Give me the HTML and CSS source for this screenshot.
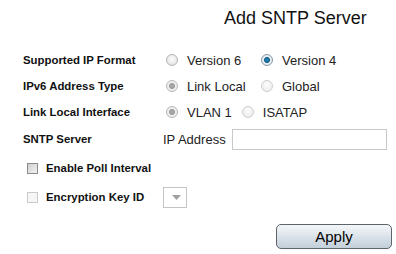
FILE: index.html
```html
<!DOCTYPE html>
<html lang="en">
<head>
    <meta charset="UTF-8">
    <title>Add SNTP Server</title>
    <link rel="stylesheet" href="styles.css">
</head>
<body>
    <h1 class="title">Add SNTP Server</h1>
    <form class="sntp-form">
        <div class="row">
            <span class="label">Supported IP Format</span>
            <div class="options">
                <label class="option fixed"><input type="radio" name="format" class="radio"> Version 6</label>
                <label class="option"><input type="radio" name="format" class="radio" checked> Version 4</label>
            </div>
        </div>
        <div class="row">
            <span class="label">IPv6 Address Type</span>
            <div class="options">
                <label class="option fixed"><input type="radio" name="type" class="radio" checked disabled> Link Local</label>
                <label class="option"><input type="radio" name="type" class="radio" disabled> Global</label>
            </div>
        </div>
        <div class="row">
            <span class="label">Link Local Interface</span>
            <div class="options">
                <label class="option"><input type="radio" name="iface" class="radio" checked disabled> VLAN 1</label>
                <label class="option near"><input type="radio" name="iface" class="radio" disabled> ISATAP</label>
            </div>
        </div>
        <div class="row server-row">
            <span class="label">SNTP Server</span>
            <div class="options">
                <span class="plain">IP Address</span>
                <input type="text" class="text-input">
            </div>
        </div>
        <div class="row check-row poll-row">
            <label class="check-label"><input type="checkbox" class="check"> Enable Poll Interval</label>
        </div>
        <div class="row check-row">
            <label class="check-label"><input type="checkbox" class="check light"> Encryption Key ID</label>
            <div class="options">
                <span class="dropdown">
                    <svg width="9" height="5" viewBox="0 0 9 5"><path d="M0 0h9L4.5 5z" fill="#a0a0a0"/></svg>
                </span>
            </div>
        </div>
        <div class="actions">
            <button type="button" class="apply">Apply</button>
        </div>
    </form>
</body>
</html>
```

FILE: styles.css
```css
body {
    margin: 0;
    padding: 0;
    background: #fff;
    font-family: "Liberation Sans", Arial, sans-serif;
    color: #111;
}

.title {
    margin: 0;
    padding: 8px 0 0 224px;
    font-size: 18px;
    font-weight: normal;
    line-height: 20px;
    color: #111;
}

.sntp-form {
    margin-top: 19px;
}

.row {
    display: flex;
    align-items: center;
    height: 26px;
}

.label {
    width: 140px;
    padding-left: 23px;
    font-size: 11.4px;
    font-weight: bold;
    color: #111;
}

.options {
    display: flex;
    align-items: center;
    font-size: 13px;
    color: #222;
}

.option {
    display: flex;
    align-items: center;
    margin-left: 3px;
}

.option.fixed {
    width: 92px;
}

.option.near {
    margin-left: 10px;
}

/* radio buttons */
.radio {
    appearance: none;
    -webkit-appearance: none;
    width: 12px;
    height: 12px;
    margin: 0 9px 0 0;
    border: 1px solid #b4b4b4;
    border-radius: 50%;
    background: radial-gradient(circle at 50% 40%, #fcfcfc 0%, #e4e4e4 80%);
    box-sizing: border-box;
}

.radio:checked {
    border-color: #8a98a4;
    background: radial-gradient(circle, #2c8fc0 0, #0f5f8c 2.5px, #e8eef2 3.5px, #dfe4e8 100%);
}

.radio:disabled {
    border-color: #cfcfcf;
    background: radial-gradient(circle at 50% 40%, #fdfdfd 0%, #ececec 80%);
}

.radio:checked:disabled {
    border-color: #b8b8b8;
    background: radial-gradient(circle, #b0b0b0 0, #9a9a9a 2.5px, #f0f0f0 3.5px, #e4e4e4 100%);
}

.server-row {
    height: 28px;
}

.plain {
    margin-right: 6px;
}

.text-input {
    width: 155px;
    height: 21px;
    padding: 0;
    border: 1px solid #c8c8c8;
    box-sizing: border-box;
}

.check-row {
    height: 28px;
}

.poll-row {
    height: 30px;
}

.check-label {
    display: flex;
    align-items: center;
    width: 163px;
    padding-left: 27px;
    box-sizing: border-box;
    font-size: 11.4px;
    font-weight: bold;
    color: #111;
}

.check {
    appearance: none;
    -webkit-appearance: none;
    width: 11px;
    height: 11px;
    margin: 0 8px 0 0;
    border: 1px solid #8c8c8c;
    background: linear-gradient(135deg, #d0d0d0, #f2f2f2);
    box-sizing: border-box;
}

.check.light {
    border-color: #cacaca;
    background: #f6f6f6;
}

.dropdown {
    display: flex;
    align-items: center;
    justify-content: flex-end;
    width: 24px;
    height: 21px;
    padding-right: 5px;
    border: 1px solid #c4c4c4;
    box-sizing: border-box;
}

.actions {
    display: flex;
    justify-content: flex-end;
    margin-top: 13px;
    padding-right: 4px;
}

.apply {
    width: 116px;
    height: 25px;
    border: 1px solid #5e6469;
    border-radius: 5px;
    background: linear-gradient(#f4f7f9, #dbe3ea 50%, #c2cfd9);
    font-family: "Liberation Sans", Arial, sans-serif;
    font-size: 15px;
    color: #000;
    cursor: pointer;
}
```
